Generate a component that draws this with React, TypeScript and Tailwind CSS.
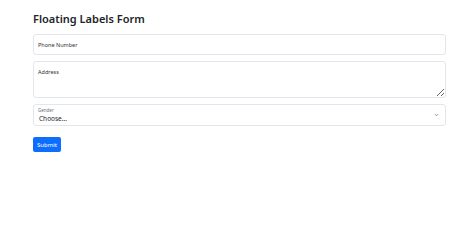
import { useState } from 'react'

export default function App() {
  const [phone, setPhone] = useState('')
  const [address, setAddress] = useState('')
  const [gender, setGender] = useState('')

  return (
    <div className="w-[474px] h-[209px] bg-white font-['Noto_Sans',sans-serif] text-[#212529]">
      <div className="pl-[33px] pr-[28px] pt-[12px]">
        <h1 className="text-[11px] font-semibold leading-[14px] mb-[8px]">Floating Labels Form</h1>

        <form className="flex flex-col gap-[6px]" onSubmit={(e) => e.preventDefault()}>
          <div className="relative">
            <input
              type="text"
              value={phone}
              onChange={(e) => setPhone(e.target.value)}
              className="block w-full h-[21px] border border-[#e3e6ea] rounded-[3px] px-[5px] text-[6px] focus:outline-none"
            />
            {!phone && (
              <label className="absolute left-[5px] top-[7px] text-[5.5px] leading-[8px] text-[#333] pointer-events-none">
                Phone Number
              </label>
            )}
          </div>

          <div className="relative">
            <textarea
              value={address}
              onChange={(e) => setAddress(e.target.value)}
              className="block w-full h-[37px] border border-[#e3e6ea] rounded-[3px] px-[5px] pt-[7px] text-[6px] focus:outline-none"
            />
            {!address && (
              <label className="absolute left-[5px] top-[7px] text-[5.5px] leading-[8px] text-[#333] pointer-events-none">
                Address
              </label>
            )}
          </div>

          <div className="relative">
            <select
              value={gender}
              onChange={(e) => setGender(e.target.value)}
              className="block w-full h-[22px] appearance-none border border-[#e3e6ea] rounded-[3px] px-[5px] pt-[8px] text-[6.5px] leading-[8px] bg-white focus:outline-none"
            >
              <option value="">Choose...</option>
              <option value="m">Male</option>
              <option value="f">Female</option>
            </select>
            <label className="absolute left-[5px] top-[3px] text-[4.5px] leading-[6px] text-[#6c757d] pointer-events-none">
              Gender
            </label>
            <svg
              className="absolute right-[7px] top-[9px] pointer-events-none"
              width="5"
              height="4"
              viewBox="0 0 16 16"
              fill="none"
              stroke="#343a40"
              strokeWidth="2"
              strokeLinecap="round"
              strokeLinejoin="round"
            >
              <path d="M2 5l6 6 6-6" />
            </svg>
          </div>

          <div className="flex pt-[5px]">
            <button
              type="submit"
              className="w-[28px] h-[15px] bg-[#0d6efd] text-white text-[6px] leading-[8px] rounded-[2px]"
            >
              Submit
            </button>
          </div>
        </form>
      </div>
    </div>
  )
}
